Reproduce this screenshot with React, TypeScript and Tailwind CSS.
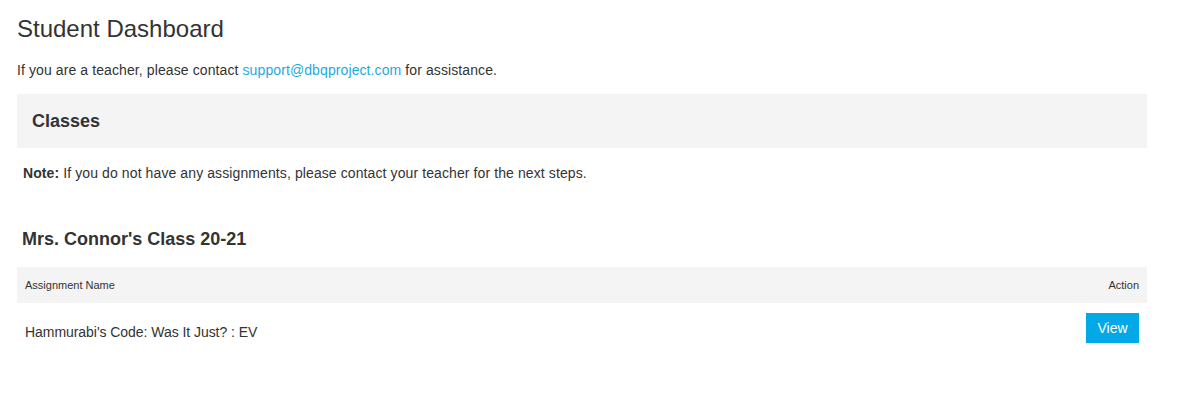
import React from 'react';

const App: React.FC = () => {
  return (
    <div className="min-h-[401px] bg-white text-[#333] font-['Liberation_Sans',Arial,sans-serif]">
      <div className="ml-[17px] w-[1130px] pt-[16px]">
        <h1 className="text-[24px] leading-[26px] font-normal">Student Dashboard</h1>
        <p className="mt-[18px] text-[14px] leading-[20px] tracking-[0.1px]">
          If you are a teacher, please contact <a className="text-[#1fa9e1]">support@dbqproject.com</a> for assistance.
        </p>

        {/* Classes panel */}
        <div className="mt-[14px] h-[54px] bg-[#f4f4f4] px-[15px] flex items-center">
          <h2 className="text-[18px] leading-[20px] font-bold">Classes</h2>
        </div>

        <p className="mt-[15px] ml-[6px] text-[14px] leading-[20px] tracking-[0.1px]">
          <b>Note:</b> If you do not have any assignments, please contact your teacher for the next steps.
        </p>

        <h3 className="mt-[46px] ml-[5px] text-[18px] leading-[20px] font-bold">Mrs. Connor's Class 20-21</h3>

        {/* Assignments table */}
        <div className="mt-[18px]">
          <div className="h-[36px] bg-[#f4f4f4] px-[8px] flex items-center justify-between text-[11px] leading-[16px]">
            <span>Assignment Name</span>
            <span>Action</span>
          </div>
          <div className="flex items-start justify-between px-[8px] pt-[10px]">
            <span className="mt-[9px] text-[14px] leading-[20px] tracking-[-0.05px]">Hammurabi's Code: Was It Just? : EV</span>
            <button className="h-[30px] w-[53px] bg-[#03a9e6] text-white text-[14px] leading-[20px]">View</button>
          </div>
        </div>
      </div>
    </div>
  );
};

export default App;
